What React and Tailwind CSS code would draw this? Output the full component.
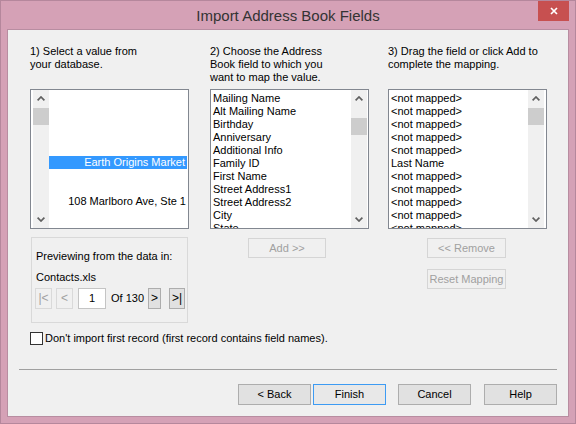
import React from 'react';

const Chevron = ({ down }) => (
  <svg width="8" height="5" viewBox="0 0 8 5">
    <polyline
      points={down ? '0.6,0.6 4,4 7.4,0.6' : '0.6,4.4 4,1 7.4,4.4'}
      fill="none"
      stroke="#606060"
      strokeWidth="1.7"
    />
  </svg>
);

// thin windows-style scrollbar, thumb offset is passed as a class
const ScrollBar = ({ thumbClass }) => (
  <div className="w-[16px] h-full bg-[#f0f0f0] flex flex-col">
    <div className="h-[17px] flex items-center justify-center shrink-0">
      <Chevron />
    </div>
    <div className="flex-1">
      <div className={`h-[17px] bg-[#cdcdcd] ${thumbClass}`} />
    </div>
    <div className="h-[17px] flex items-center justify-center shrink-0">
      <Chevron down />
    </div>
  </div>
);

const fields = [
  'Mailing Name',
  'Alt Mailing Name',
  'Birthday',
  'Anniversary',
  'Additional Info',
  'Family ID',
  'First Name',
  'Street Address1',
  'Street Address2',
  'City',
  'State',
];

const mapped = [
  '<not mapped>',
  '<not mapped>',
  '<not mapped>',
  '<not mapped>',
  '<not mapped>',
  'Last Name',
  '<not mapped>',
  '<not mapped>',
  '<not mapped>',
  '<not mapped>',
  '<not mapped>',
];

const sourceRows = ['', '', '', '', '', 'Earth Origins Market', '', '', '108 Marlboro Ave, Ste 1', ''];

const DisabledBtn = ({ children, className = '' }) => (
  <div className={`h-[20px] border border-[#d5d5d5] bg-[#f0f0f0] text-[#a0a0a0] flex items-center justify-center ${className}`}>
    {children}
  </div>
);

const DialogBtn = ({ children, primary }) => (
  <div
    className={`w-[73px] h-[21px] flex items-center justify-center border ${
      primary ? 'border-[#3d9bf3] bg-[#e8e8e8]' : 'border-[#adadad] bg-[#e1e1e1]'
    }`}
  >
    {children}
  </div>
);

const App = () => {
  return (
    <div className="w-[576px] h-[424px] bg-[#d5a1b6] border border-[#b5879c] flex flex-col font-['Liberation_Sans',Arial,sans-serif] text-[11px] leading-[13px] text-black overflow-hidden">
      {/* title bar */}
      <div className="h-[28px] flex items-start shrink-0">
        <div className="w-[37px]" />
        <div className="flex-1 h-full flex items-center justify-center text-[15px] text-[#333333]">
          Import Address Book Fields
        </div>
        <div className="w-[31px] h-[21px] -mt-px bg-[#c75050] flex items-center justify-center mr-[6px]">
          <svg width="8" height="8" viewBox="0 0 8 8">
            <path d="M1 1 L7 7 M7 1 L1 7" stroke="#fff" strokeWidth="1.7" />
          </svg>
        </div>
      </div>

      {/* body */}
      <div className="ml-[6px] w-[562px] h-[388px] border border-[#b88da1] bg-[#f0f0f0] shrink-0 flex flex-col">
        <div className="flex pl-[22px] pt-[15px]">
          {/* column 1 */}
          <div className="w-[159px] flex flex-col">
            <div className="h-[44px]">
              1) Select a value from
              <br />
              your database.
            </div>
            <div className="h-[140px] border border-[#828790] bg-white flex">
              <div className="pl-[2px] h-full">
                <ScrollBar thumbClass="mt-px" />
              </div>
              <div className="flex-1 pt-px overflow-hidden">
                {sourceRows.map((r, i) => (
                  <div
                    key={i}
                    className={`h-[13px] text-right pr-[2px] whitespace-nowrap ${
                      i === 5 ? 'bg-[#3399ff] text-white mr-px' : ''
                    }`}
                  >
                    {r}
                  </div>
                ))}
              </div>
            </div>
            <div className="mt-[8px] ml-px w-[157px] h-[86px] border border-[#d9d9d9] pt-[12px] px-[3px]">
              <div className="pl-px">Previewing from the data in:</div>
              <div className="pl-px mt-[8px]">Contacts.xls</div>
              <div className="flex items-center mt-[4px] h-[21px] whitespace-nowrap">
                <div className="shrink-0 w-[17px] h-[21px] border border-[#d9d9d9] text-[#a0a0a0] flex items-center justify-center text-[12px]">
                  |&lt;
                </div>
                <div className="shrink-0 ml-[4px] w-[17px] h-[21px] border border-[#d9d9d9] text-[#a0a0a0] flex items-center justify-center text-[12px]">
                  &lt;
                </div>
                <div className="shrink-0 ml-[5px] w-[28px] h-[21px] border border-[#c4c4c4] bg-white flex items-center justify-center">
                  1
                </div>
                <div className="shrink-0 ml-[5px]">Of 130</div>
                <div className="shrink-0 ml-[4px] w-[13px] h-[21px] border border-[#adadad] bg-[#e1e1e1] flex items-center justify-center text-[12px]">
                  &gt;
                </div>
                <div className="shrink-0 ml-[8px] w-[16px] h-[21px] border border-[#adadad] bg-[#e1e1e1] flex items-center justify-center text-[12px]">
                  &gt;|
                </div>
              </div>
            </div>
          </div>

          {/* column 2 */}
          <div className="ml-[21px] w-[159px] flex flex-col">
            <div className="h-[44px]">
              2) Choose the Address
              <br />
              Book field to which you
              <br />
              want to map the value.
            </div>
            <div className="h-[140px] border border-[#828790] bg-white flex">
              <div className="flex-1 pt-[2px] pl-[2px] overflow-hidden">
                {fields.map((f) => (
                  <div key={f} className="h-[13px] whitespace-nowrap">
                    {f}
                  </div>
                ))}
              </div>
              <div className="pr-px h-full">
                <ScrollBar thumbClass="mt-[11px]" />
              </div>
            </div>
            <DisabledBtn className="mt-[9px] ml-[38px] w-[78px]">Add &gt;&gt;</DisabledBtn>
          </div>

          {/* column 3 */}
          <div className="ml-[19px] w-[159px] flex flex-col">
            <div className="h-[44px]">
              3) Drag the field or click Add to
              <br />
              complete the mapping.
            </div>
            <div className="h-[140px] border border-[#828790] bg-white flex">
              <div className="flex-1 pt-[2px] pl-[2px] overflow-hidden">
                {mapped.map((m, i) => (
                  <div key={i} className="h-[13px] whitespace-nowrap">
                    {m}
                  </div>
                ))}
              </div>
              <div className="pr-[2px] h-full">
                <ScrollBar thumbClass="mt-px" />
              </div>
            </div>
            <DisabledBtn className="mt-[9px] ml-[39px] w-[79px]">&lt;&lt; Remove</DisabledBtn>
            <DisabledBtn className="mt-[11px] ml-[39px] w-[79px]">Reset Mapping</DisabledBtn>
          </div>
        </div>

        {/* checkbox */}
        <div className="flex items-center pl-[22px] mt-[9px] h-[13px]">
          <div className="w-[13px] h-[13px] border border-[#333333] bg-white" />
          <span className="ml-[2px]">Don't import first record (first record contains field names).</span>
        </div>

        <div className="mt-[24px] mx-[11px] border-t border-[#a0a0a0]" />

        {/* dialog buttons */}
        <div className="flex justify-end pr-[11px] mt-[14px]">
          <DialogBtn>&lt; Back</DialogBtn>
          <div className="ml-[2px]">
            <DialogBtn primary>Finish</DialogBtn>
          </div>
          <div className="ml-[12px]">
            <DialogBtn>Cancel</DialogBtn>
          </div>
          <div className="ml-[13px]">
            <DialogBtn>Help</DialogBtn>
          </div>
        </div>
      </div>
    </div>
  );
};

export default App;
